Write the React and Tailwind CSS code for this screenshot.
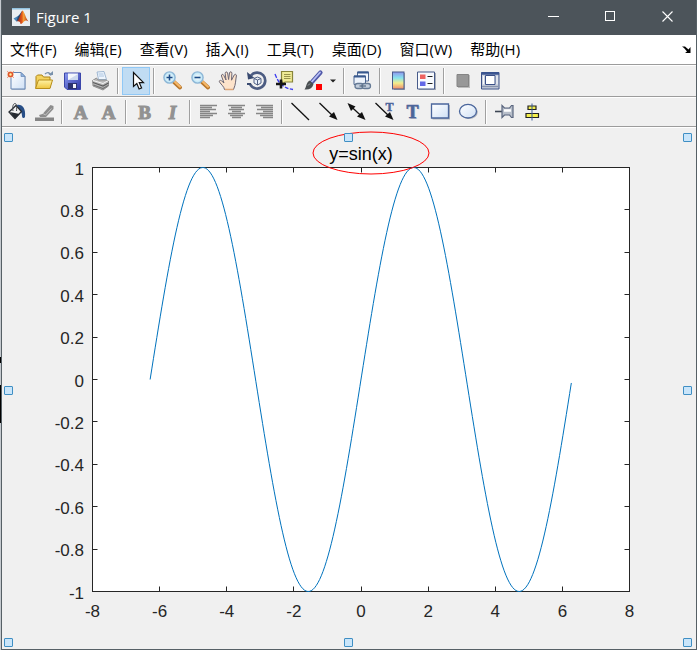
import React from "react";

const Icon = ({ children }) => (
  <svg width="20" height="20" viewBox="0 0 20 20" className="block shrink-0 overflow-visible" aria-hidden="true">
    {children}
  </svg>
);

const Tool = ({ label, active, children }) => (
  <button
    type="button"
    aria-label={label}
    className={
      "flex w-7 shrink-0 items-center justify-center " +
      (active ? "h-7 border border-[#90c8f6] bg-[#c0dcf3]" : "h-7")
    }
  >
    <Icon>{children}</Icon>
  </button>
);

const Separator = () => (
  <div className="flex w-2 shrink-0 self-stretch py-0.5 pl-[3px]">
    <div className="w-px bg-[#a0a0a0]" />
    <div className="w-px bg-white" />
  </div>
);

const Toolbar = ({ label, height, children }) => (
  <div
    role="toolbar"
    aria-label={label}
    className={
      "flex items-center overflow-hidden border-t border-[#9c9c9c] pt-px shadow-[inset_0_1px_0_#ffffff] " + height
    }
  >
    {children}
  </div>
);

const menus = ["文件(F)", "编辑(E)", "查看(V)", "插入(I)", "工具(T)", "桌面(D)", "窗口(W)", "帮助(H)"];

function Gradients() {
  return (
    <svg width="0" height="0" className="absolute" aria-hidden="true">
      <defs>
        <linearGradient id="paper" x1="0" y1="0" x2="1" y2="1">
          <stop offset="0" stopColor="#ffffff" />
          <stop offset="1" stopColor="#cfe0f5" />
        </linearGradient>
        <linearGradient id="jet" x1="0" y1="0" x2="0" y2="1">
          <stop offset="0" stopColor="#8f95ee" />
          <stop offset="0.35" stopColor="#86e4ee" />
          <stop offset="0.65" stopColor="#f3ee8c" />
          <stop offset="1" stopColor="#f08a6c" />
        </linearGradient>
        <linearGradient id="folder" x1="0" y1="0" x2="0" y2="1">
          <stop offset="0" stopColor="#fff3a6" />
          <stop offset="1" stopColor="#efc63f" />
        </linearGradient>
        <linearGradient id="disk" x1="0" y1="0" x2="1" y2="1">
          <stop offset="0" stopColor="#8d9cf0" />
          <stop offset="1" stopColor="#2c36a8" />
        </linearGradient>
        <radialGradient id="lens">
          <stop offset="0" stopColor="#ffffff" />
          <stop offset="1" stopColor="#b5e2f5" />
        </radialGradient>
        <linearGradient id="membrane" x1="0" y1="0" x2="1" y2="0">
          <stop offset="0" stopColor="#8c1a10" />
          <stop offset="0.45" stopColor="#e2571b" />
          <stop offset="0.6" stopColor="#f6a33a" />
          <stop offset="1" stopColor="#a82412" />
        </linearGradient>
      </defs>
    </svg>
  );
}

function TitleBar() {
  return (
    <header className="flex h-[35px] items-center bg-[#4c545a] pb-0.5 text-white">
      <svg width="18" height="18" viewBox="0 0 18 18" className="ml-2.5 shrink-0" aria-hidden="true">
        <rect width="18" height="18" fill="#e9eef2" />
        <rect width="18" height="1.5" fill="#93c3e0" />
        <path d="M1.5 10.5 6 8l2 1.5-3.5 4z" fill="#4a86b8" />
        <path d="M6 8c2-1 3-4.500 4.500-5L8 11.500 4.500 13.500z" fill="#274b78" />
        <path d="M10.500 2.500c2 1 3 7.500 6 11-2-1.500-3-1.500-5 .5-1.500 1.500-2 2-3 2 0-2-1.500-3.500-4-2.500 3-1.500 4-9 6-11z" fill="url(#membrane)" />
      </svg>
      <h1 className="ml-1.5 flex-1 text-[15px] leading-5">Figure 1</h1>
      <button type="button" aria-label="Minimize" className="flex h-full w-[57px] items-center justify-center">
        <svg width="11" height="11" viewBox="0 0 11 11"><path d="M0 5.500h11" stroke="#fff" /></svg>
      </button>
      <button type="button" aria-label="Maximize" className="flex h-full w-[57px] items-center justify-center">
        <svg width="11" height="11" viewBox="0 0 11 11"><rect x=".5" y=".5" width="9" height="9" fill="none" stroke="#fff" /></svg>
      </button>
      <button type="button" aria-label="Close" className="flex h-full w-[57px] items-center justify-center">
        <svg width="11" height="11" viewBox="0 0 11 11"><path d="M.5.5l10 10M10.500.5l-10 10" stroke="#fff" strokeWidth="1.1" /></svg>
      </button>
    </header>
  );
}

function MenuBar() {
  return (
    <nav className="flex h-[29px] items-center gap-0.5 overflow-hidden bg-white pb-0.5 text-black">
      {menus.map((m) => (
        <button key={m} type="button" className="shrink-0 px-2 text-[15px] leading-5">
          {m}
        </button>
      ))}
      <button type="button" aria-label="Dock figure" className="mr-1 ml-auto">
        <svg width="10" height="10" viewBox="0 0 10 10" className="block">
          <path d="M0 2.500h3l3.500 3L8.500 3v6H3l2-1.500L2 4z" fill="#000" />
        </svg>
      </button>
    </nav>
  );
}

const Lens = () => (
  <>
    <path d="M12 11l6 5.500" stroke="#b9772b" strokeWidth="4" strokeLinecap="round" />
    <path d="M12.500 10.500l5.500 5.200" stroke="#f6b869" strokeWidth="2" strokeLinecap="round" />
    <circle cx="7.500" cy="6.500" r="5.600" fill="url(#lens)" stroke="#8db6d6" strokeWidth="1.400" />
  </>
);

function FigureToolbar() {
  return (
    <Toolbar label="Figure" height="h-8">
      <Tool label="New figure">
        <path d="M6 2h9.500l4 4v13H6z" fill="#7b8da8" opacity=".5" />
        <path d="M5 1.500h10l4 4v12.500H5z" fill="url(#paper)" stroke="#6585b3" />
        <path d="M15 1.500v4h4z" fill="#8fb4e0" stroke="#6585b3" strokeWidth=".7" />
        <circle cx="4.500" cy="3.500" r="3.300" fill="#f5c8a6" />
        <circle cx="4.500" cy="3.500" r="2" fill="#fff3a0" stroke="#df542d" strokeWidth="1.500" />
        <path d="M1.500.5l1 1M7.500.5l-1 1M1.500 6.500l1-1M7.500 6.500l-1-1" stroke="#df542d" />
      </Tool>
      <Tool label="Open file">
        <path d="M2 17V5.500L3.500 4H8l1.500 2H16v11z" fill="#f4d35f" stroke="#ad8415" />
        <path d="M1.500 17.500L4.500 9h14l-2.500 8.500z" fill="url(#folder)" stroke="#b88e1b" />
        <path d="M11 3c2-2 5-2 6 1.500" fill="none" stroke="#7991ab" strokeWidth="1.400" />
        <path d="M14.500 4h4.500V0z" fill="#7991ab" />
      </Tool>
      <Tool label="Save figure">
        <path d="M2.500 2h16v16.500H5L2.500 16z" fill="url(#disk)" stroke="#3b46aa" />
        <path d="M6 2.500h10v6.500H6z" fill="#f4f7fc" />
        <path d="M6 9l10-6v6z" fill="#ccd8ee" />
        <path d="M6 12h9v6H6z" fill="#2b3270" />
        <path d="M11 13h3v4h-3z" fill="#f2f4fa" />
      </Tool>
      <Tool label="Print figure">
        <path d="M7 1l7-.5 2.500 8H8.500z" fill="#eef5fd" stroke="#8daac9" strokeWidth=".8" />
        <path d="M8.500 3h5M9 5h5" stroke="#9ab8d8" strokeWidth=".8" />
        <path d="M2.500 9.500L6.500 7l1.500 2h8l2.500 1v5L13 19l-10-4z" fill="#b9b9b9" stroke="#808080" strokeWidth=".8" />
        <path d="M3 9.500l10 3 5.500-3" fill="none" stroke="#f6f6f6" />
        <path d="M3 11.500l10 3.500 5.500-3" fill="none" stroke="#5c5c5c" strokeWidth="1.300" />
        <path d="M3.500 14l9.500 3.500 5-3" fill="none" stroke="#747474" strokeWidth="1.200" />
      </Tool>
      <Separator />
      <Tool label="Edit plot" active>
        <path d="M7.500 1.500v14l3.300-3 2.300 5.500 2.500-1-2.300-5.300h4.200z" fill="#fff" stroke="#111" strokeWidth="1.200" />
      </Tool>
      <Separator />
      <Tool label="Zoom in">
        <Lens />
        <path d="M4.500 6.500h6M7.500 3.500v6" stroke="#1b4b87" strokeWidth="1.600" />
      </Tool>
      <Tool label="Zoom out">
        <Lens />
        <path d="M4.500 6.500h6" stroke="#1b4b87" strokeWidth="1.600" />
      </Tool>
      <Tool label="Pan">
        <path
          d="M6.500 18.500c-.5-3-3-4.500-5-7.500-.8-1.300.8-2.200 2-1.200L6 12 3.500 5c-.5-1.700 1.600-2.300 2.200-.8L8 9 7.200 2.500C7 .6 9.200.4 9.600 2l1 6.500L11.500 2c.2-1.700 2.400-1.500 2.400.2l-.4 7L16.200 4c.8-1.400 2.600-.6 2.200.9C17.500 9 18 13 15.500 18.500z"
          fill="#fde3cb" stroke="#6d6673" strokeWidth="1" />
        <path d="M7 18.500h8.500" stroke="#dfa779" strokeWidth="1.500" />
      </Tool>
      <Tool label="Rotate 3D">
        <path d="M5 4.500a8 8 0 1 1-1 8.500" fill="none" stroke="#4c5c82" strokeWidth="2.700" />
        <path d="M1 1l1 7.500L8.500 7z" fill="#394a70" />
        <path d="M1 13h4" stroke="#394a70" strokeWidth="2" />
        <path d="M8 7.500l3.500-1.500 3.500 1.500v4.500l-3.500 2L8 12zM8 7.500l3.500 1.500 3.500-1.500M11.500 9v5" fill="#e8effa" stroke="#516184" strokeWidth="1" />
      </Tool>
      <Tool label="Data cursor">
        <path d="M1 3c2 5 4 9 7 11 4 3 7 4 11 4.500" fill="none" stroke="#3a3af0" strokeWidth="1.300" strokeDasharray="4 1.500" />
        <path d="M7.500.5h11v10.500H11L8.500 13V11h-1z" fill="#f0eb96" stroke="#88843a" strokeWidth="1.200" />
        <path d="M10 3.500h6.500M10 5.500h6.500M10 7.500h6.500" stroke="#98934c" />
        <path d="M7 8.500v9M2 13h10" stroke="#151515" strokeWidth="2.600" />
      </Tool>
      <Tool label="Brush data">
        <path d="M18.500 1.500L10 11" stroke="#5058a8" strokeWidth="4.200" strokeLinecap="round" />
        <path d="M18 1.500L10 10.500" stroke="#b9c0f5" strokeWidth="1.800" strokeLinecap="round" />
        <path d="M7.500 9.500l4 3.500c-1 4-4 6-9 5.500 2-2 1.500-7 5-9z" fill="#4a4f52" />
        <path d="M6 14.500l2-2" stroke="#a3aaae" />
        <path d="M14 13h6v6h-6z" fill="#f00" />
      </Tool>
      <button type="button" aria-label="Brush options" className="flex h-7 w-3.5 shrink-0 items-center justify-center">
        <svg width="6" height="4" viewBox="0 0 6 4"><path d="M0 .5h6L3 3.500z" fill="#222" /></svg>
      </button>
      <Separator />
      <Tool label="Link plot">
        <path d="M5.500 1h11v9h-11z" fill="#f4f8fd" stroke="#4c6690" />
        <path d="M5.500 1.500h11" stroke="#38598e" strokeWidth="2" />
        <path d="M2 5h11.500v8.500H2z" fill="#edf3fb" stroke="#4c6690" />
        <path d="M2 5.500h11.500" stroke="#38598e" strokeWidth="2" />
        <rect x="3" y="12.500" width="8.500" height="5" rx="2.500" fill="#c4cfdd" stroke="#657a95" strokeWidth="1.300" />
        <rect x="10" y="12.500" width="8.500" height="5" rx="2.500" fill="#c4cfdd" stroke="#657a95" strokeWidth="1.300" />
        <path d="M7.500 15h6.500" stroke="#51667f" strokeWidth="1.200" />
      </Tool>
      <Separator />
      <Tool label="Insert colorbar">
        <path d="M6 2h11v17H6z" fill="#a9adb5" />
        <rect x="4.500" y="1" width="11.500" height="17" fill="url(#jet)" stroke="#475b8a" />
      </Tool>
      <Tool label="Insert legend">
        <path d="M3 2h17v17H3z" fill="#a9adb5" />
        <path d="M1.500 1h17v17h-17z" fill="#f8fafd" stroke="#475b8a" />
        <path d="M4 3.500h5.500v4.500H4z" fill="#ee6360" />
        <path d="M4 10.500h5.500V15H4z" fill="#6267e6" />
        <path d="M11.500 5.500h5M11.500 12.500h5" stroke="#202020" strokeWidth="1.200" />
      </Tool>
      <Separator />
      <Tool label="Hide plot tools">
        <path d="M6 4h12v13H6z" fill="#bdbdbd" />
        <path d="M5 3.500h11.500v12H5z" fill="#989898" stroke="#858585" />
      </Tool>
      <Tool label="Show plot tools and dock figure">
        <path d="M1.500 1.500h17.500v16.500H1.500z" fill="#cbd1de" stroke="#3b5088" />
        <path d="M1.500 2.500H19" stroke="#3b5591" strokeWidth="2.500" />
        <path d="M5.500 4.500h9.500v9H5.500z" fill="#fff" stroke="#3b5088" />
        <path d="M3.500 5v8M17 5v8" stroke="#f7f9fc" />
        <path d="M2 15.500h16.500" stroke="#8793ac" strokeWidth="1.500" />
      </Tool>
    </Toolbar>
  );
}

const glyph = { fontFamily: "Liberation Serif, serif", fontWeight: 700, textAnchor: "middle" };
const left = "M2 3.500h17M2 5.500h12M2 7.500h16M2 9.500h10M2 11.500h17M2 13.500h13M2 15.500h10";
const center = "M2 3.500h17M5 5.500h11M3 7.500h15M6 9.500h9M2 11.500h17M4 13.500h13M6 15.500h9";
const right = "M2 3.500h17M7 5.500h12M3 7.500h16M9 9.500h10M2 11.500h17M6 13.500h13M9 15.500h10";

const GrayLetter = ({ italic, children }) => (
  <>
    <text x="11" y="17" fontSize="19" fontStyle={italic ? "italic" : "normal"} fill="#c0c0c0" {...glyph}>{children}</text>
    <text x="10.500" y="16.500" fontSize="19" fontStyle={italic ? "italic" : "normal"} fill="#929292" stroke="#929292" strokeWidth="1" {...glyph}>{children}</text>
  </>
);

function PlotEditToolbar() {
  return (
    <Toolbar label="Plot edit" height="h-[30px]">
      <Tool label="Face color">
        <path d="M11 3c5-1 9 3 8 12-1 2-3 1-3-1 0-3-1-5-4-6z" fill="#284f87" />
        <path d="M3 10l7-6.500 5.500 6-6.500 7z" fill="#f2f2f2" stroke="#282d33" strokeWidth="1.300" />
        <path d="M4 10l9.500 2-4.500 4.500z" fill="#252a31" />
        <path d="M7 9C6 4 7.500 1.500 9 1.500S11 4 10.500 9" fill="none" stroke="#42474d" />
      </Tool>
      <Tool label="Edge color">
        <path d="M1 15.500h19V19H1z" fill="#858585" />
        <path d="M5 13l3.500-1L16.500 3l3 1v3L12 15H6z" fill="#8d8d8d" />
        <path d="M9 11.500l2.500 1.500 6-6.500" fill="none" stroke="#c4c4c4" />
      </Tool>
      <Separator />
      <Tool label="Text color"><GrayLetter>A</GrayLetter></Tool>
      <Tool label="Font"><GrayLetter>A</GrayLetter></Tool>
      <Separator />
      <Tool label="Bold"><GrayLetter>B</GrayLetter></Tool>
      <Tool label="Italic"><GrayLetter italic>I</GrayLetter></Tool>
      <Separator />
      <Tool label="Align left"><path d={left} stroke="#868686" strokeWidth="1.600" /></Tool>
      <Tool label="Align center"><path d={center} stroke="#868686" strokeWidth="1.600" /></Tool>
      <Tool label="Align right"><path d={right} stroke="#868686" strokeWidth="1.600" /></Tool>
      <Separator />
      <Tool label="Insert line"><path d="M1.500 1l17.500 17" stroke="#111" strokeWidth="1.300" /></Tool>
      <Tool label="Insert arrow">
        <path d="M1.500 1l15 14.500" stroke="#111" strokeWidth="1.300" />
        <path d="M19.500 18l-8.500-3.500 5-4.500z" fill="#111" />
      </Tool>
      <Tool label="Insert double arrow">
        <path d="M4 3.500l13 12" stroke="#111" strokeWidth="1.300" />
        <path d="M19.500 18l-8.500-3.500 5-4.500z" fill="#111" />
        <path d="M1.500 1l8 3.500-4.500 4.500z" fill="#111" />
      </Tool>
      <Tool label="Insert text arrow">
        <path d="M1.500 1l15 14.500" stroke="#111" strokeWidth="1.300" />
        <path d="M19.500 18l-8.500-3.500 5-4.500z" fill="#111" />
        <text x="15.500" y="9" fontSize="12" fill="#4c659a" stroke="#4c659a" strokeWidth=".5" {...glyph}>T</text>
      </Tool>
      <Tool label="Insert text box">
        <text x="11.500" y="17" fontSize="18" fill="#b4bac6" {...glyph}>T</text>
        <text x="10.500" y="16" fontSize="18" fill="#4c659a" stroke="#4c659a" strokeWidth=".6" {...glyph}>T</text>
      </Tool>
      <Tool label="Insert rectangle">
        <path d="M2.500 3H20v14.500H2.500z" fill="#aeb2ba" />
        <path d="M1.500 2h17v14h-17z" fill="url(#paper)" stroke="#4a669c" strokeWidth="1.300" />
      </Tool>
      <Tool label="Insert ellipse">
        <ellipse cx="11" cy="10" rx="8.800" ry="7" fill="#aeb2ba" />
        <ellipse cx="10" cy="9.200" rx="8.500" ry="6.800" fill="url(#paper)" stroke="#4a669c" strokeWidth="1.300" />
      </Tool>
      <Separator />
      <Tool label="Pin to axes">
        <path d="M1 9.500h7" stroke="#3d4654" strokeWidth="1.600" />
        <path d="M8 3.500v12L10.500 13h5l2 2.500h1.500v-12h-1.500L15.500 6h-5z" fill="#b8bfca" stroke="#59657e" strokeWidth="1.200" />
        <path d="M10 8.500h7" stroke="#fff" strokeWidth="2.500" />
      </Tool>
      <Tool label="Align and distribute">
        <path d="M6 4h8v3.500H6z" fill="#f4ef4b" stroke="#222" strokeWidth="1.200" />
        <path d="M4 11.500h12.500v4H4z" fill="#f4ef4b" stroke="#222" strokeWidth="1.200" />
        <path d="M10 1.500v17" stroke="#365a94" />
      </Tool>
    </Toolbar>
  );
}

const plot = { left: 90.5, top: 39.5, width: 537, height: 424 };
const px = (x) => plot.left + ((x + 8) / 16) * plot.width;
const py = (y) => plot.top + ((1 - y) / 2) * plot.height;
const snap = (v) => Math.floor(v) + 0.5;

const xTicks = [-8, -6, -4, -2, 0, 2, 4, 6, 8];
const yTicks = [1, 0.8, 0.6, 0.4, 0.2, 0, -0.2, -0.4, -0.6, -0.8, -1];

const curve = Array.from({ length: 252 }, (_, i) => {
  const x = -2 * Math.PI + i * 0.05;
  return `${px(x).toFixed(2)},${py(Math.sin(x)).toFixed(2)}`;
}).join(" ");

function Chart() {
  const right = plot.left + plot.width;
  const bottom = plot.top + plot.height;
  return (
    <svg
      viewBox="0 0 694 521"
      className="block h-auto w-full font-['Liberation_Sans',Arial,sans-serif]"
      role="img"
      aria-label="y=sin(x)"
    >
      <rect x={plot.left} y={plot.top} width={plot.width} height={plot.height} fill="#fff" stroke="#262626" />
      <g stroke="#262626">
        {xTicks.map((t) => (
          <path key={t} d={`M${snap(px(t))} ${plot.top}v5M${snap(px(t))} ${bottom}v-5`} />
        ))}
        {yTicks.map((t) => (
          <path key={t} d={`M${plot.left} ${snap(py(t))}h5M${right} ${snap(py(t))}h-5`} />
        ))}
      </g>
      <polyline points={curve} fill="none" stroke="#0072bd" strokeWidth="1" />
      <g fill="#262626" fontSize="17">
        {xTicks.map((t) => (
          <text key={t} x={px(t)} y="489" textAnchor="middle">{t}</text>
        ))}
        {yTicks.map((t) => (
          <text key={t} x="82" y={Math.round(py(t)) + 7} textAnchor="end">{t}</text>
        ))}
      </g>
      <text x="359" y="32" fontSize="18" textAnchor="middle" fill="#000">y=sin(x)</text>
      <ellipse cx="369" cy="25" rx="58" ry="21" fill="none" stroke="#f00" />
    </svg>
  );
}

const Handle = ({ hidden }) => (
  <span className={hidden ? "size-[9px]" : "size-[9px] rounded-[1px] border border-[#3f8fc4] bg-[#c9e5fa]"} />
);

function Canvas() {
  return (
    <main className="flex-1 border-t border-[#9c9c9c] pt-px shadow-[inset_0_1px_0_#ffffff]">
      <div className="relative">
        <Chart />
        <div className="pointer-events-none absolute inset-0 flex flex-col justify-between pt-[5px] pr-1 pb-0.5 pl-0.5">
          {[0, 1, 2].map((row) => (
            <div key={row} className="flex justify-between">
              <Handle />
              <Handle hidden={row === 1} />
              <Handle />
            </div>
          ))}
        </div>
      </div>
    </main>
  );
}

export default function App() {
  return (
    <div className="flex min-h-screen bg-[#c5cacf] font-['Open_Sans','Noto_Sans_CJK_SC',sans-serif]">
      <Gradients />
      <div className="flex w-px shrink-0 flex-col pt-[357px]">
        <div className="h-[6px] bg-black" />
        <div className="mt-[22px] h-[38px] bg-black" />
      </div>
      <div className="flex min-w-0 flex-1 flex-col border-x border-b border-[#566066] bg-[#f0f0f0]">
        <TitleBar />
        <MenuBar />
        <FigureToolbar />
        <PlotEditToolbar />
        <Canvas />
      </div>
    </div>
  );
}
